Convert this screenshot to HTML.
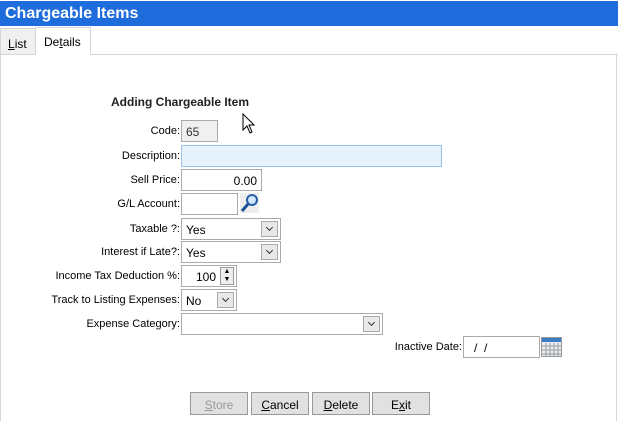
<!DOCTYPE html>
<html><head><style>
*{box-sizing:border-box;margin:0;padding:0}
body{width:618px;height:421px;background:#fff;font-family:"Liberation Sans",Arial,sans-serif;font-size:11px;color:#000;position:relative;overflow:hidden}
.a{position:absolute}
.title{left:0;top:1px;width:618px;height:25px;background:#1f6ddc;color:#fff;font-weight:bold;font-size:16px;padding:4px 0 0 5px}
.lbl{text-align:right;width:180px;left:0}
.f{border:1px solid #aaa;background:#fff;height:22px;padding:4px 4px;font-size:12px}
.sel .ar{position:absolute;right:2px;top:2px;width:17px;height:16px;border:1px solid #aaa;background:#e8e8e8}
.sel .ar:after{content:"";position:absolute;left:5px;top:3px;width:4px;height:4px;border-right:1px solid #333;border-bottom:1px solid #333;transform:rotate(45deg)}
.btn{top:392px;height:23px;width:58px;border:1px solid #999;background:#e1e1e1;text-align:center;padding-top:5px;font-size:12px}
</style></head><body>
<div class="a title">Chargeable Items</div>
<div class="a" style="left:0;top:28px;width:36px;height:27px;background:#f0f0f0;border:1px solid #d5d5d5;padding:8px 0 0 7px;font-size:12px"><u>L</u>ist</div>
<div class="a" style="left:35px;top:27px;width:56px;height:28px;background:#fff;border:1px solid #d5d5d5;border-bottom:none;padding:7px 0 0 8px;font-size:12px">De<u>t</u>ails</div>
<div class="a" style="left:90px;top:54px;width:528px;height:1px;background:#d5d5d5"></div>
<div class="a" style="left:0;top:54px;width:1px;height:367px;background:#d5d5d5"></div>
<div class="a" style="left:616px;top:54px;width:1px;height:367px;background:#d5d5d5"></div>
<div class="a" style="left:111px;top:95px;font-weight:bold;color:#222;font-size:12px">Adding Chargeable Item</div>
<svg class="a" style="left:242px;top:113px" width="14" height="22" viewBox="0 0 14 22"><path d="M1 1V17L5 13L8 20L10 19L7 12H12Z" fill="#fff" stroke="#000"/></svg>
<div class="a lbl" style="top:125px">Code:</div>
<div class="a f" style="left:181px;top:120px;width:37px;background:#f0f0f0;color:#333">65</div>
<div class="a lbl" style="top:150px">Description:</div>
<div class="a f" style="left:181px;top:145px;width:261px;background:#e5f1fb;border-color:#9cc4e8"></div>
<div class="a lbl" style="top:174px">Sell Price:</div>
<div class="a f" style="left:181px;top:169px;width:81px;text-align:right">0.00</div>
<div class="a lbl" style="top:198px">G/L Account:</div>
<div class="a f" style="left:181px;top:193px;width:57px"></div>
<svg class="a" style="left:240px;top:193px" width="19" height="20"><rect x="0" y="0" width="19" height="20" fill="#eee"/><circle cx="12" cy="7" r="5" fill="#cfe6fb" stroke="#2a5fa8" stroke-width="2"/><path d="M8 11L2 18" stroke="#1d4e9a" stroke-width="3"/></svg>
<div class="a lbl" style="top:223px">Taxable ?:</div>
<div class="a f sel" style="left:181px;top:218px;width:100px">Yes<span class="ar"></span></div>
<div class="a lbl" style="top:246px">Interest if Late?:</div>
<div class="a f sel" style="left:181px;top:241px;width:100px">Yes<span class="ar"></span></div>
<div class="a lbl" style="top:270px">Income Tax Deduction %:</div>
<div class="a f" style="left:181px;top:265px;width:56px;padding-right:20px;text-align:right">100</div>
<div class="a" style="left:220px;top:267px;width:14px;height:18px;border:1px solid #999;background:#eee;font-size:7px;line-height:8px;text-align:center">▲<br>▼</div>
<div class="a lbl" style="top:294px">Track to Listing Expenses:</div>
<div class="a f sel" style="left:181px;top:289px;width:56px">No<span class="ar"></span></div>
<div class="a lbl" style="top:318px">Expense Category:</div>
<div class="a f sel" style="left:181px;top:313px;width:202px"><span class="ar"></span></div>
<div class="a" style="left:362px;top:341px;width:100px;text-align:right">Inactive Date:</div>
<div class="a f" style="left:463px;top:336px;width:77px;padding-left:10px">/ &nbsp;/</div>
<svg class="a" style="left:541px;top:337px" width="21" height="20"><rect x="0.5" y="0.5" width="20" height="19" fill="#e8eef4" stroke="#999"/><rect x="1" y="1" width="19" height="4" fill="#3c7cc4"/><g stroke="#999"><path d="M1 9H20M1 13H20M1 17H20M5 6V19M9 6V19M13 6V19M17 6V19"/></g></svg>
<div class="a btn" style="left:190px;color:#999"><u>S</u>tore</div>
<div class="a btn" style="left:251px"><u>C</u>ancel</div>
<div class="a btn" style="left:312px"><u>D</u>elete</div>
<div class="a btn" style="left:372px">E<u>x</u>it</div>
</body></html>
